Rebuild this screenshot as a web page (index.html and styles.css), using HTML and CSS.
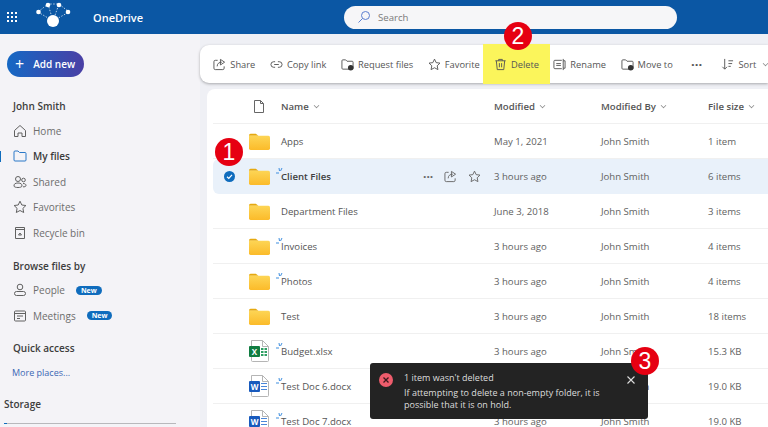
FILE: index.html
```html
<!DOCTYPE html>
<html>
<head>
    <title>OneDrive</title>
    <link rel="stylesheet" href="styles.css">
</head>
<body>
    <svg class="defs" width="0" height="0">
        <defs>
            <linearGradient id="folder-fill" x1="0" y1="0" x2="0" y2="1">
                <stop offset="0" stop-color="#fdd555"/>
                <stop offset="1" stop-color="#fbbb2a"/>
            </linearGradient>
        </defs>
        <symbol id="folder" viewBox="0 0 20 16">
            <path d="M0 2a1.500 1.500 0 0 1 1.500-1.500h5L9 2.500h-9z" fill="#e6a90f"/>
            <path d="M0 2.500h18.500a1.500 1.500 0 0 1 1.500 1.500v10.500a1.500 1.500 0 0 1-1.500 1.500h-17a1.500 1.500 0 0 1-1.500-1.500z" fill="url(#folder-fill)"/>
        </symbol>
        <symbol id="sync" viewBox="0 0 8 7">
            <path d="M1 6h3M4 1l.5 3M7 1L5.500 4" fill="none" stroke="#3f8fe0"/>
        </symbol>
        <symbol id="sheet-x" viewBox="0 0 20 22">
            <path d="M1.500.5h11l6 6v14a1 1 0 0 1-1 1h-15a1 1 0 0 1-1-1z" fill="#fff" stroke="#b5b5b5"/>
            <path d="M12.500.5v6h6" fill="none" stroke="#b5b5b5"/>
            <path d="M11 8h2.500v2H11zM14.500 8H17v2h-2.500zM11 11h2.500v2H11zM14.500 11H17v2h-2.500zM11 14h2.500v2H11zM14.500 14H17v2h-2.500z" fill="#2f9e63"/>
        </symbol>
        <symbol id="sheet-w" viewBox="0 0 20 22">
            <path d="M1.500.5h11l6 6v14a1 1 0 0 1-1 1h-15a1 1 0 0 1-1-1z" fill="#fff" stroke="#b5b5b5"/>
            <path d="M12.500.5v6h6" fill="none" stroke="#b5b5b5"/>
            <path d="M11 8.500h6M11 11.500h6M11 14.500h6" fill="none" stroke="#4a86d8"/>
        </symbol>
        <symbol id="star" viewBox="0 0 14 14">
            <path d="M7 1.200l1.800 3.800 4.100.5-3 2.900.8 4.100L7 10.500l-3.700 2 .8-4.100-3-2.900 4.100-.5z" fill="none" stroke="currentColor"/>
        </symbol>
        <symbol id="share" viewBox="0 0 14 14">
            <path d="M5 2.500H2.500a1.500 1.500 0 0 0-1.500 1.500v7a1.500 1.500 0 0 0 1.500 1.500h8a1.500 1.500 0 0 0 1.500-1.500V9M4.500 9c0-3 2-4.500 5-4.500M8 1.500l4.500 3-4.500 3z" fill="none" stroke="currentColor"/>
        </symbol>
        <symbol id="folder-line" viewBox="0 0 14 14">
            <path d="M1 3a1 1 0 0 1 1-1h3l1.500 1.500H12a1 1 0 0 1 1 1V11a1 1 0 0 1-1 1H2a1 1 0 0 1-1-1z" fill="none" stroke="currentColor"/>
            <circle cx="10.500" cy="10.500" r="3" fill="#333"/>
        </symbol>
    </svg>

    <header class="topbar">
        <div class="waffle">
            <i></i><i></i><i></i><i></i><i></i><i></i><i></i><i></i><i></i>
        </div>
        <svg class="logo" width="36" height="30" viewBox="0 0 36 30">
            <path d="M3 10L13 2h11l10 8M3 10l15 9 16-9M13 2l5 17 6-17" fill="none" stroke="#fff" stroke-width=".7" stroke-dasharray="1.500 1.500"/>
            <circle cx="3.500" cy="10" r="2.300" fill="#fff"/>
            <circle cx="13" cy="3" r="2.300" fill="#fff"/>
            <circle cx="24" cy="3" r="2.300" fill="#fff"/>
            <circle cx="33" cy="10" r="2.300" fill="#fff"/>
            <circle cx="18" cy="19" r="6" fill="#fff"/>
        </svg>
        <span class="brand">OneDrive</span>
        <div class="search">
            <svg width="14" height="14" viewBox="0 0 14 14"><circle cx="8.500" cy="5.500" r="4" fill="none" stroke="#5b7fd0"/><path d="M5.500 8.500L1.500 12.500" stroke="#5b7fd0"/></svg>
            <span>Search</span>
        </div>
    </header>

    <div class="layout">
        <nav class="sidebar">
            <button class="add-new"><span class="plus">+</span> Add new</button>
            <h3 class="side-title first">John Smith</h3>
            <a class="side-item">
                <svg viewBox="0 0 14 14"><path d="M1.500 6.500L7 1.500l5.500 5v6h-3.500V9H5v3.500H1.500z" fill="none" stroke="currentColor"/></svg>
                Home
            </a>
            <a class="side-item active">
                <svg viewBox="0 0 14 14"><path d="M1 3a1 1 0 0 1 1-1h3l1.500 1.500H12a1 1 0 0 1 1 1V11a1 1 0 0 1-1 1H2a1 1 0 0 1-1-1z" fill="none" stroke="#2a78c8"/></svg>
                My files
            </a>
            <a class="side-item">
                <svg viewBox="0 0 14 14"><circle cx="5" cy="4" r="2.500" fill="none" stroke="currentColor"/><circle cx="10.500" cy="5" r="1.800" fill="none" stroke="currentColor"/><path d="M1 11c0-2 1-3 4-3s4 1 4 3-8 2-8 0zM10 8.500c2 0 3 .8 3 2 0 1-1.500 1.500-3 1.300" fill="none" stroke="currentColor"/></svg>
                Shared
            </a>
            <a class="side-item">
                <svg><use href="#star"/></svg>
                Favorites
            </a>
            <a class="side-item">
                <svg viewBox="0 0 14 14"><path d="M2.500 1.500h9v11h-9zM2.500 3.500h9M5.500 9l1.500-2 1.500 2z" fill="none" stroke="currentColor"/></svg>
                Recycle bin
            </a>
            <h3 class="side-title">Browse files by</h3>
            <a class="side-item">
                <svg viewBox="0 0 14 14"><circle cx="7" cy="4" r="2.800" fill="none" stroke="currentColor"/><rect x="1.500" y="8.500" width="11" height="4" rx="2" fill="none" stroke="currentColor"/></svg>
                People <span class="new-tag">New</span>
            </a>
            <a class="side-item">
                <svg viewBox="0 0 14 14"><rect x="1.500" y="2" width="11" height="10" rx="1" fill="none" stroke="currentColor"/><path d="M1.500 4.500h11M4 7h6M4 9.500h3" fill="none" stroke="currentColor"/></svg>
                Meetings <span class="new-tag">New</span>
            </a>
            <h3 class="side-title quick">Quick access</h3>
            <a class="more-places">More places...</a>
            <h3 class="storage-title">Storage</h3>
            <div class="storage-bar"><div class="storage-used"></div></div>
        </nav>

        <main class="content">
            <div class="commands">
                <a class="cmd"><svg><use href="#share"/></svg>Share</a>
                <a class="cmd"><svg viewBox="0 0 14 14"><path d="M5.500 4H4a3 3 0 0 0 0 6h1.500M8.500 4H10a3 3 0 0 1 0 6H8.500M4.500 7h5" fill="none" stroke="currentColor"/></svg>Copy link</a>
                <a class="cmd"><svg><use href="#folder-line"/></svg>Request files</a>
                <a class="cmd"><svg><use href="#star"/></svg>Favorite</a>
                <a class="cmd delete"><svg viewBox="0 0 14 14"><path d="M1.500 3h11M5 3V1.500h4V3M2.500 3l1 9.500h7l1-9.500M5.800 5.500v4.500M8.200 5.500v4.500" fill="none" stroke="currentColor"/></svg>Delete</a>
                <a class="cmd"><svg viewBox="0 0 14 14"><path d="M9.500 2.500H2a1 1 0 0 0-1 1v7a1 1 0 0 0 1 1h7.500M11 1v12M3.500 6h5M3.500 8h5M11 3h2v8h-2" fill="none" stroke="currentColor"/></svg>Rename</a>
                <a class="cmd"><svg><use href="#folder-line"/></svg>Move to</a>
                <a class="cmd dots">···</a>
                <a class="cmd sort"><svg viewBox="0 0 14 14"><path d="M4 1v11M1.500 9.500L4 12l2.500-2.500M8 3h5M8 6h4M8 9h2.500" fill="none" stroke="currentColor"/></svg>Sort <span class="caret"></span></a>
            </div>

            <section class="files">
                <div class="row head">
                    <span></span>
                    <svg class="doc-head" width="10" height="13" viewBox="0 0 10 13"><path d="M.5.500h6l3 3v9h-9zM6.500.500v3h3" fill="none" stroke="#666"/></svg>
                    <span class="col-title">Name <span class="caret"></span></span>
                    <span class="col-title">Modified <span class="caret"></span></span>
                    <span class="col-title">Modified By <span class="caret"></span></span>
                    <span class="col-title">File size <span class="caret"></span></span>
                </div>

                <div class="row">
                    <span></span>
                    <svg class="file-icon"><use href="#folder"/></svg>
                    <span class="name">Apps</span>
                    <span>May 1, 2021</span><span>John Smith</span><span>1 item</span>
                </div>
                <div class="row selected">
                    <svg class="check" width="11" height="11" viewBox="0 0 11 11"><circle cx="5.500" cy="5.500" r="5.500" fill="#0f6cbd"/><path d="M3 5.800l1.800 1.700L8 3.800" fill="none" stroke="#fff" stroke-width="1.200"/></svg>
                    <svg class="file-icon"><use href="#folder"/></svg>
                    <span class="name bold">
                        <svg class="sync"><use href="#sync"/></svg>Client Files
                        <span class="row-actions">
                            <span class="row-dots">···</span>
                            <svg><use href="#share"/></svg>
                            <svg><use href="#star"/></svg>
                        </span>
                    </span>
                    <span>3 hours ago</span><span>John Smith</span><span>6 items</span>
                </div>
                <div class="row">
                    <span></span>
                    <svg class="file-icon"><use href="#folder"/></svg>
                    <span class="name">Department Files</span>
                    <span>June 3, 2018</span><span>John Smith</span><span>3 items</span>
                </div>
                <div class="row">
                    <span></span>
                    <svg class="file-icon"><use href="#folder"/></svg>
                    <span class="name"><svg class="sync"><use href="#sync"/></svg>Invoices</span>
                    <span>3 hours ago</span><span>John Smith</span><span>4 items</span>
                </div>
                <div class="row">
                    <span></span>
                    <svg class="file-icon"><use href="#folder"/></svg>
                    <span class="name"><svg class="sync"><use href="#sync"/></svg>Photos</span>
                    <span>3 hours ago</span><span>John Smith</span><span>4 items</span>
                </div>
                <div class="row">
                    <span></span>
                    <svg class="file-icon"><use href="#folder"/></svg>
                    <span class="name">Test</span>
                    <span>3 hours ago</span><span>John Smith</span><span>18 items</span>
                </div>
                <div class="row">
                    <span></span>
                    <span class="office-icon">
                        <svg class="sheet-icon"><use href="#sheet-x"/></svg>
                        <b class="letter excel">X</b>
                    </span>
                    <span class="name"><svg class="sync"><use href="#sync"/></svg>Budget.xlsx</span>
                    <span>3 hours ago</span><span>John Smith</span><span>15.3 KB</span>
                </div>
                <div class="row">
                    <span></span>
                    <span class="office-icon">
                        <svg class="sheet-icon"><use href="#sheet-w"/></svg>
                        <b class="letter word">W</b>
                    </span>
                    <span class="name"><svg class="sync"><use href="#sync"/></svg>Test Doc 6.docx</span>
                    <span>3 hours ago</span><span>John Smith</span><span>19.0 KB</span>
                </div>
                <div class="row">
                    <span></span>
                    <span class="office-icon">
                        <svg class="sheet-icon"><use href="#sheet-w"/></svg>
                        <b class="letter word">W</b>
                    </span>
                    <span class="name"><svg class="sync"><use href="#sync"/></svg>Test Doc 7.docx</span>
                    <span>3 hours ago</span><span>John Smith</span><span>19.0 KB</span>
                </div>
            </section>
        </main>
    </div>

    <div class="toast">
        <svg class="toast-err" width="14" height="14" viewBox="0 0 14 14"><circle cx="7" cy="7" r="7" fill="#ee5c6c"/><path d="M4.500 4.500l5 5M9.500 4.500l-5 5" stroke="#3a1a1e" stroke-width="1.300"/></svg>
        <div class="toast-text">
            <div class="toast-title">1 item wasn't deleted</div>
            <div>If attempting to delete a non-empty folder, it is possible that it is on hold.</div>
        </div>
        <svg class="toast-close" width="10" height="10" viewBox="0 0 10 10"><path d="M1.500 1.500l7 7M8.500 1.500l-7 7" stroke="#ddd" stroke-width="1.100"/></svg>
    </div>

    <span class="callout one">1</span>
    <span class="callout two">2</span>
    <span class="callout three">3</span>
</body>
</html>
```

FILE: styles.css
```css
* {
    margin: 0;
    padding: 0;
    box-sizing: border-box;
}

html, body {
    height: 100%;
    overflow: hidden;
}

body {
    position: relative;
    font-family: "Open Sans", "Noto Sans", sans-serif;
    font-size: 9.600px;
    color: #424242;
    background: #f4f3f7;
}

.defs {
    position: absolute;
}

.topbar {
    display: flex;
    align-items: center;
    height: 34px;
    background: #0b57a4;
    color: #fff;
}

.waffle {
    display: grid;
    grid-template-columns: repeat(3, 2px);
    gap: 2px;
    margin-left: 7px;
}

.waffle i {
    width: 2px;
    height: 2px;
    background: #fff;
}

.logo {
    margin-left: 18px;
}

.brand {
    margin-left: 22px;
    font-size: 11px;
    font-weight: 600;
}

.search {
    display: flex;
    align-items: center;
    gap: 7px;
    width: 333px;
    height: 23px;
    margin-left: 201px;
    padding-left: 13px;
    background: #f6f6f8;
    border-radius: 12px;
    color: #7a7a7a;
}

.layout {
    display: flex;
}

.sidebar {
    flex: none;
    width: 200px;
    padding: 17px 0 0 13px;
}

.add-new {
    display: flex;
    align-items: center;
    gap: 9px;
    width: 77px;
    height: 26px;
    margin-left: -6px;
    padding-left: 8px;
    border: 0;
    border-radius: 13px;
    background: linear-gradient(90deg, #1568c4, #4a3fa5);
    color: #fff;
    font-family: inherit;
    font-size: 10px;
    font-weight: 600;
}

.plus {
    font-size: 16px;
    font-weight: 400;
    line-height: 1;
}

.side-title {
    margin-top: 13px;
    margin-bottom: 3px;
    height: 16px;
    font-size: 10px;
    font-weight: 600;
    color: #3d3d3d;
}

.side-title.first {
    margin-top: 22px;
    margin-bottom: 3px;
}

.side-title.quick {
    margin-top: 12px;
}

.side-item {
    position: relative;
    display: flex;
    align-items: center;
    gap: 6px;
    height: 25.500px;
    font-size: 10px;
    color: #6d6d6d;
}

.side-item svg {
    width: 14px;
    height: 14px;
    color: #616161;
}

.side-item.active {
    color: #3a3a3a;
    font-weight: 600;
}

.side-item.active::before {
    content: "";
    position: absolute;
    left: -13px;
    top: 7px;
    width: 1px;
    height: 11px;
    background: #0f6cbd;
}

.new-tag {
    margin-left: 5px;
    padding: 0 5px;
    height: 9px;
    line-height: 9px;
    border-radius: 5px;
    background: #0f6cbd;
    color: #fff;
    font-size: 7px;
    font-weight: 700;
}

.more-places {
    display: block;
    margin-top: 9px;
    margin-left: -1px;
    font-size: 9px;
    color: #3b68b5;
}

.storage-title {
    margin-top: 18px;
    margin-left: -9px;
    font-size: 10px;
    font-weight: 600;
    color: #3d3d3d;
}

.storage-bar {
    width: 172px;
    height: 1px;
    margin-top: 12px;
    margin-left: -9px;
    background: #b8b8bc;
}

.storage-used {
    width: 3px;
    height: 1px;
    background: #0f6cbd;
}

.content {
    flex: 1;
    min-width: 0;
    padding-top: 11px;
    background: #eff0f5;
}

.commands {
    display: flex;
    align-items: center;
    height: 38px;
    padding-left: 6px;
    background: #fff;
    border-radius: 9px 0 0 9px;
    box-shadow: 0 1px 3px rgba(0, 0, 0, 0.3);
    font-size: 9.300px;
    white-space: nowrap;
}

.cmd {
    display: flex;
    flex: none;
    align-items: center;
    gap: 4px;
    height: 100%;
    padding: 0 7.300px;
    color: #555;
}

.cmd svg {
    flex: none;
    width: 13px;
    height: 13px;
    color: #555;
}

.cmd.delete {
    height: 40px;
    margin: 0 -4px;
    padding: 0 11px;
    background: #fbf55b;
}

.cmd.dots {
    padding: 0 12px 0 11px;
    font-size: 13px;
    font-weight: 700;
}

.caret {
    display: inline-block;
    width: 5px;
    height: 5px;
    margin: 0 0 2px 3px;
    border-right: 1px solid #888;
    border-bottom: 1px solid #888;
    transform: rotate(45deg) scale(.8);
}

.files {
    margin-top: 6px;
    margin-left: 7px;
    background: #fff;
    border-radius: 8px 0 0 0;
}

.row {
    display: grid;
    grid-template-columns: 35px 33px 213px 107px 107px 1fr;
    align-items: center;
    height: 35px;
    margin-left: 6px;
    border-bottom: 1px solid #f0f0f0;
    color: #616161;
}

.row.head {
    font-weight: 600;
    color: #555;
}

.row.selected {
    background: #e9f1fa;
    border-radius: 6px 0 0 6px;
    border-bottom: 0;
}

.col-title {
    white-space: nowrap;
}

.doc-head {
    margin-left: 6px;
}

.check {
    margin-left: 11px;
}

.file-icon {
    width: 21px;
    height: 17px;
    margin-left: 1px;
}

.name {
    position: relative;
    display: flex;
    align-items: center;
    color: #555;
}

.name.bold {
    font-weight: 600;
    color: #3f3f3f;
}

.sync {
    position: absolute;
    left: -6px;
    top: -3px;
    width: 8px;
    height: 7px;
}

.row-actions {
    position: absolute;
    left: 142px;
    display: flex;
    align-items: center;
    gap: 11px;
    color: #666;
    font-weight: 400;
}

.row-actions svg {
    width: 13px;
    height: 13px;
}

.row-dots {
    font-size: 12px;
    font-weight: 700;
}

.office-icon {
    position: relative;
    display: block;
    width: 21px;
    height: 23px;
    margin-left: 1px;
}

.sheet-icon {
    position: absolute;
    left: 1px;
    top: 0;
    width: 20px;
    height: 22px;
}

.letter {
    position: absolute;
    left: 0;
    top: 6px;
    width: 11px;
    height: 11px;
    border-radius: 1px;
    color: #fff;
    font-size: 8px;
    line-height: 11px;
    text-align: center;
}

.letter.excel {
    background: #107c41;
}

.letter.word {
    background: #185abd;
}

.toast {
    position: absolute;
    left: 370px;
    top: 363px;
    display: flex;
    width: 278px;
    height: 56px;
    padding: 10px 12px 0 9px;
    border-radius: 3px;
    background: #232323;
    color: #ddd;
    font-size: 9px;
    line-height: 12.500px;
}

.toast-err {
    flex: none;
}

.toast-text {
    flex: 1;
    margin-top: -1px;
    margin-left: 11px;
}

.toast-title {
    margin-bottom: 2px;
}

.toast-close {
    flex: none;
    margin-top: 2px;
    margin-left: 7px;
}

.callout {
    position: absolute;
    width: 28px;
    height: 28px;
    border-radius: 50%;
    background: #e60012;
    color: #fff;
    font-family: "Liberation Sans", sans-serif;
    font-size: 23px;
    line-height: 28px;
    text-align: center;
}

.one {
    left: 215px;
    top: 138px;
}

.two {
    left: 504px;
    top: 22px;
}

.three {
    left: 631px;
    top: 347px;
}
```
